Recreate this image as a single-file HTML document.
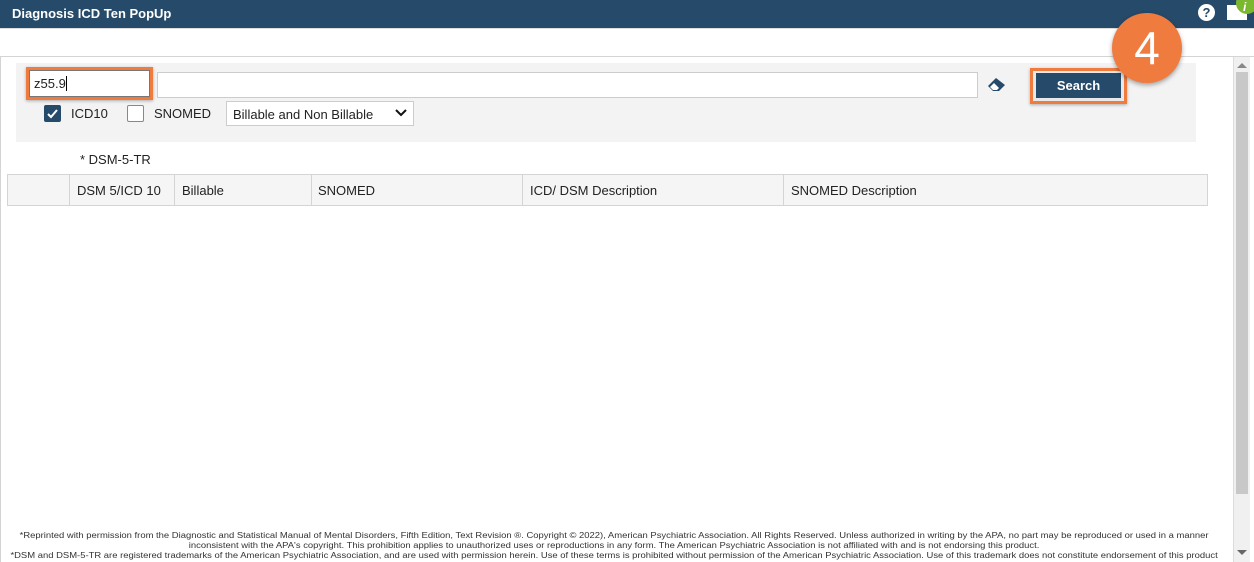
<!DOCTYPE html>
<html><head><style>
*{box-sizing:border-box;margin:0;padding:0}
body{width:1254px;height:562px;overflow:hidden;background:#fff;font-family:"Liberation Sans",Arial,sans-serif;position:relative;font-size:13px;color:#222}
.abs{position:absolute}
</style></head><body>
<div class="abs" style="left:0;top:0;width:1254px;height:28px;background:#264a69"></div>
<div class="abs" style="left:12px;top:6px;color:#fff;font-weight:bold;font-size:13px">Diagnosis ICD Ten PopUp</div>
<div class="abs" style="left:1198px;top:4px;width:17px;height:17px;border-radius:50%;background:#fff;color:#264a69;font-weight:bold;font-size:13px;text-align:center;line-height:17px">?</div>
<div class="abs" style="left:1227px;top:5px;width:20px;height:15px;background:#fff"></div>
<div class="abs" style="left:1236px;top:-8px;width:22px;height:22px;border-radius:50%;background:#7cb82f;color:#fff;font-style:italic;font-weight:bold;font-size:12px;padding:8px 0 0 7px">i</div>
<div class="abs" style="left:0;top:28px;width:1254px;height:1px;background:#ddd"></div>
<div class="abs" style="left:0;top:56px;width:1254px;height:506px;border-top:1px solid #d4d4d4;border-left:1px solid #d4d4d4"></div>
<div class="abs" style="left:1233px;top:57px;width:17px;height:505px;background:#f0f0f0;border-left:1px solid #ddd"></div>
<div class="abs" style="left:1236px;top:72px;width:12px;height:422px;background:#c8c8c8"></div>
<div class="abs" style="left:1237px;top:63px;width:0;height:0;border-left:5px solid transparent;border-right:5px solid transparent;border-bottom:5px solid #888"></div>
<div class="abs" style="left:1237px;top:550px;width:0;height:0;border-left:5px solid transparent;border-right:5px solid transparent;border-top:5px solid #666"></div>
<div class="abs" style="left:16px;top:63px;width:1180px;height:79px;background:#f3f3f3"></div>
<div class="abs" style="left:26px;top:67px;width:127px;height:33px;border:3px solid #f07b3f;box-shadow:0 1px 3px rgba(0,0,0,.3)"></div>
<div class="abs" style="left:29px;top:70px;width:121px;height:27px;background:#fff;border:1px solid #777;padding:5px 0 0 4px;font-size:13px">z55.9<span style="display:inline-block;width:1px;height:15px;background:#000;vertical-align:-3px"></span></div>
<div class="abs" style="left:157px;top:72px;width:821px;height:26px;background:#fff;border:1px solid #ccc"></div>
<svg class="abs" style="left:987px;top:77px" width="20" height="15" viewBox="0 0 20 15"><path d="M1 9 L9 1 L18 8 L12 14 L6 14 Z" fill="#264a69"/><path d="M3 10 L7 6 L12 11 L10 13 L6 13Z" fill="#fff"/></svg>
<div class="abs" style="left:1030px;top:68px;width:97px;height:36px;border:3px solid #f07b3f;background:#e8e8e8;box-shadow:0 1px 3px rgba(0,0,0,.3)"></div>
<div class="abs" style="left:1036px;top:73px;width:85px;height:25px;background:#264a69;color:#fff;font-weight:bold;font-size:13px;text-align:center;line-height:25px">Search</div>
<div class="abs" style="left:1112px;top:13px;width:70px;height:70px;border-radius:50%;background:#f07b3f;color:#fff;font-size:46px;text-align:center;line-height:70px;box-shadow:0 2px 5px rgba(0,0,0,.35)">4</div>
<div class="abs" style="left:44px;top:105px;width:17px;height:17px;background:#264a69;border-radius:2px"></div>
<svg class="abs" style="left:44px;top:105px" width="17" height="17"><path d="M4 9 L7 12 L13 5" stroke="#fff" stroke-width="2" fill="none"/></svg>
<div class="abs" style="left:71px;top:106px;font-size:13px">ICD10</div>
<div class="abs" style="left:127px;top:105px;width:17px;height:17px;background:#fff;border:1px solid #888;border-radius:2px"></div>
<div class="abs" style="left:154px;top:106px;font-size:13px">SNOMED</div>
<div class="abs" style="left:226px;top:101px;width:188px;height:25px;background:#fff;border:1px solid #ccc;padding:5px 0 0 6px;font-size:13px">Billable and Non Billable</div>
<svg class="abs" style="left:395px;top:108px" width="12" height="10"><path d="M1 2 L6 7 L11 2" stroke="#111" stroke-width="2" fill="none"/></svg>
<div class="abs" style="left:80px;top:152px;font-size:13px">* DSM-5-TR</div>
<div class="abs" style="left:7px;top:174px;width:1201px;height:32px;background:#f5f5f5;border:1px solid #d4d4d4"></div>
<div class="abs" style="left:69px;top:175px;width:1px;height:30px;background:#d4d4d4"></div>
<div class="abs" style="left:174px;top:175px;width:1px;height:30px;background:#d4d4d4"></div>
<div class="abs" style="left:311px;top:175px;width:1px;height:30px;background:#d4d4d4"></div>
<div class="abs" style="left:522px;top:175px;width:1px;height:30px;background:#d4d4d4"></div>
<div class="abs" style="left:783px;top:175px;width:1px;height:30px;background:#d4d4d4"></div>
<div class="abs" style="left:77px;top:183px">DSM 5/ICD 10</div>
<div class="abs" style="left:182px;top:183px">Billable</div>
<div class="abs" style="left:318px;top:183px">SNOMED</div>
<div class="abs" style="left:530px;top:183px">ICD/ DSM Description</div>
<div class="abs" style="left:0;top:531px;width:1230px;text-align:center;font-size:8px;line-height:10px;color:#333;white-space:nowrap;transform:scaleX(1.18);transform-origin:620px 0">*Reprinted with permission from the Diagnostic and Statistical Manual of Mental Disorders, Fifth Edition, Text Revision ®. Copyright © 2022), American Psychiatric Association. All Rights Reserved. Unless authorized in writing by the APA, no part may be reproduced or used in a manner<br>inconsistent with the APA's copyright. This prohibition applies to unauthorized uses or reproductions in any form. The American Psychiatric Association is not affiliated with and is not endorsing this product.<br>*DSM and DSM-5-TR are registered trademarks of the American Psychiatric Association, and are used with permission herein. Use of these terms is prohibited without permission of the American Psychiatric Association. Use of this trademark does not constitute endorsement of this product</div>
<div class="abs" style="left:791px;top:183px">SNOMED Description</div>
</body></html>
